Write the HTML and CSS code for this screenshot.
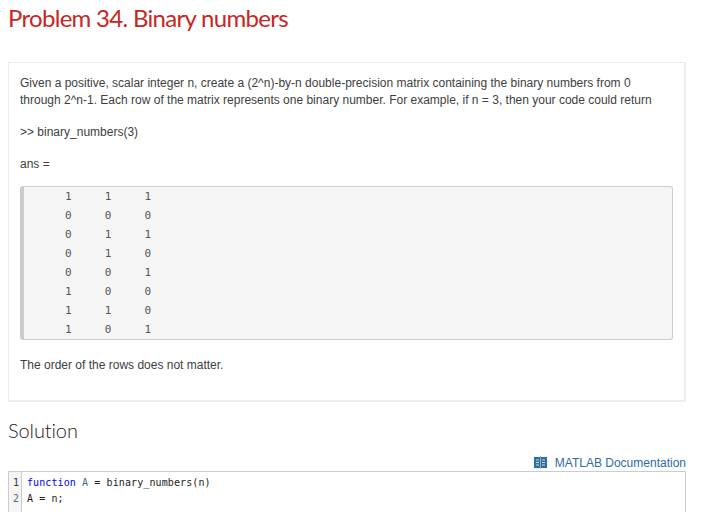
FILE: index.html
```html
<!DOCTYPE html>
<html lang="en">

<head>
    <meta charset="UTF-8">
    <meta name="viewport" content="width=device-width, initial-scale=1.0">
    <title>Problem 34. Binary numbers</title>
    <link rel="stylesheet" href="styles.css">
</head>

<body>
    <main class="page">
        <h1 class="problem-title">Problem 34. Binary numbers</h1>

        <section class="problem-panel">
            <p class="intro">Given a positive, scalar integer n, create a (2^n)-by-n double-precision matrix containing the binary numbers from 0<br>through 2^n-1. Each row of the matrix represents one binary number. For example, if n = 3, then your code could return</p>
            <p class="call">&gt;&gt; binary_numbers(3)</p>
            <p class="ans">ans =</p>
            <pre class="output">     1     1     1
     0     0     0
     0     1     1
     0     1     0
     0     0     1
     1     0     0
     1     1     0
     1     0     1</pre>
            <p class="note">The order of the rows does not matter.</p>
        </section>

        <h2 class="solution-title">Solution</h2>

        <div class="doc-row">
            <a class="doc-link" href="#">
                <svg class="doc-icon" width="13" height="13" viewBox="0 0 13 13" aria-hidden="true">
                    <rect x="0" y="1" width="13" height="11" fill="#2f6f9f"/>
                    <rect x="6" y="0" width="1" height="13" fill="#8fb4cf"/>
                    <path d="M2 4h3M2 6.5h3M2 9h3M8 4h3M8 6.5h3M8 9h3" stroke="#c9dceb" stroke-width="1" fill="none"/>
                </svg>
                MATLAB Documentation
            </a>
        </div>

        <div class="editor">
            <div class="gutter">
                <span class="active">1</span>
                <span>2</span>
            </div>
            <div class="code">
                <div class="code-line"><span class="kw">function</span> <span class="fn-out">A</span> = binary_numbers(n)</div>
                <div class="code-line">A = n;</div>
            </div>
        </div>
    </main>
</body>

</html>
```

FILE: styles.css
```css
* {
    margin: 0;
    padding: 0;
    box-sizing: border-box;
}

html,
body {
    height: 512px;
    overflow: hidden;
    background-color: #fff;
}

body {
    font-family: 'Liberation Sans', Arial, sans-serif;
    font-size: 12px;
    line-height: 18px;
    color: #404040;
}

.page {
    width: 686px;
    padding-left: 8px;
}

.problem-title {
    font-family: 'Lato', sans-serif;
    font-size: 24px;
    line-height: 28px;
    font-weight: 400;
    color: #c7271f;
    padding-top: 4px;
    letter-spacing: -0.7px;
}

.problem-panel {
    margin-top: 30px;
    height: 340px;
    padding: 12px 11px 0;
    border: 2px solid #ececec;
    border-width: 1px 2px 2px 1px;
}

.intro {
    line-height: 17px;
}

.call {
    margin-top: 14px;
}

.ans {
    margin-top: 14px;
}

.output {
    margin-top: 13px;
    height: 154px;
    padding: 0 8px;
    font-family: 'DejaVu Sans Mono', monospace;
    font-size: 11px;
    line-height: 19px;
    color: #555;
    background-color: #f5f5f5;
    border: 1px solid #ccc;
    border-left: 4px solid #ccc;
    border-radius: 3px;
}

.note {
    margin-top: 16px;
}

.solution-title {
    font-family: 'Lato', sans-serif;
    font-size: 20px;
    line-height: 24px;
    font-weight: 300;
    color: #222;
    margin-top: 16px;
    letter-spacing: -0.1px;
}

.doc-row {
    display: flex;
    justify-content: flex-end;
    margin-top: 12px;
    height: 17px;
}

.doc-link {
    display: flex;
    align-items: center;
    gap: 8px;
    color: #2f6b9f;
    text-decoration: none;
}

.editor {
    display: flex;
    height: 60px;
    border: 1px solid #ccc;
    font-family: 'DejaVu Sans Mono', monospace;
    font-size: 10px;
    line-height: 16px;
}

.gutter {
    display: flex;
    flex-direction: column;
    width: 13px;
    padding: 3px 2px 0 0;
    text-align: right;
    color: #666;
    background-color: #f5f5f5;
    border-right: 1px solid #ccc;
}

.gutter .active {
    color: #333;
}

.code {
    padding: 3px 0 0 5px;
    letter-spacing: 0.1px;
    color: #222;
}

.code-line {
    white-space: pre;
}

.kw {
    color: #0000ff;
}

.fn-out {
    color: #2f6f9f;
}
```
